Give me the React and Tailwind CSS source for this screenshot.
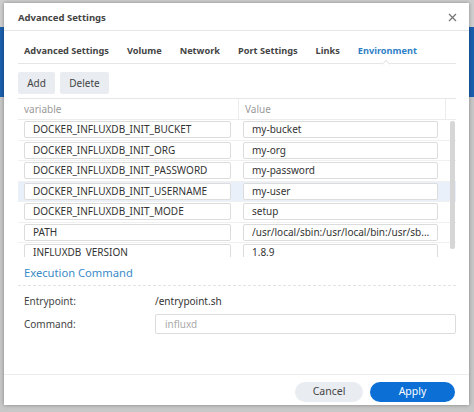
import React from "react";

const rows = [
  ["DOCKER_INFLUXDB_INIT_BUCKET", "my-bucket"],
  ["DOCKER_INFLUXDB_INIT_ORG", "my-org"],
  ["DOCKER_INFLUXDB_INIT_PASSWORD", "my-password"],
  ["DOCKER_INFLUXDB_INIT_USERNAME", "my-user"],
  ["DOCKER_INFLUXDB_INIT_MODE", "setup"],
  ["PATH", "/usr/local/sbin:/usr/local/bin:/usr/sb..."],
  ["INFLUXDB_VERSION", "1.8.9"],
];

const tabs = ["Advanced Settings", "Volume", "Network", "Port Settings", "Links", "Environment"];

export default function App() {
  return (
    <div
      className="relative w-[474px] h-[412px] overflow-hidden bg-[#c4c4c4] text-[#333]"
      style={{ fontFamily: '"Noto Sans", "DejaVu Sans", sans-serif' }}
    >
      <div className="flex flex-col h-full">
        <div className="h-[27px] bg-[#cfcfcf]" />
        <div className="h-[70px] bg-[#1b5fae]" />
        <div className="flex-1 bg-[#c8c8c8]" />
      </div>

      <div className="absolute left-[4px] top-[3px] w-[465px] h-[402px] bg-white shadow-[0_0_4px_rgba(0,0,0,0.35)] flex flex-col">
        {/* title bar */}
        <div className="h-[28px] shrink-0 flex items-center justify-between pt-[3px] pl-[14px] pr-[13px] border-b border-[#e6e6e6]">
          <span className="text-[9.5px] font-bold text-[#444] whitespace-nowrap">Advanced Settings</span>
          <svg width="9" height="9" viewBox="0 0 9 9" className="mr-[-1px] mt-[-1px]">
            <path d="M1 1 L8 8 M8 1 L1 8" stroke="#777" strokeWidth="1.3" />
          </svg>
        </div>

        <div className="flex-1 flex flex-col px-[14px] pr-[13px]">
          {/* tabs */}
          <div className="relative h-[33px] shrink-0 flex items-end pb-[8px] gap-[18px] pl-[6px] border-b border-[#e6e6e6]">
            {tabs.map((t) => (
              <span
                key={t}
                className={
                  "text-[9.2px] font-bold leading-none whitespace-nowrap " +
                  (t === "Environment" ? "text-[#2f7fc7]" : "text-[#444]")
                }
              >
                {t}
              </span>
            ))}
            <div className="absolute left-[365px] bottom-[-4px] w-[6px] h-[6px] bg-white border-l border-t border-[#e6e6e6] rotate-45" />
          </div>

          {/* buttons */}
          <div className="flex gap-[5px] mt-[8px] shrink-0">
            <div className="h-[22px] w-[37px] flex items-center justify-center bg-[#e9ecf1] rounded-[2px] text-[10px] text-[#444]">Add</div>
            <div className="h-[22px] w-[49px] flex items-center justify-center bg-[#e9ecf1] rounded-[2px] text-[10px] text-[#444]">Delete</div>
          </div>

          {/* table */}
          <div className="mt-[4px] h-[159px] shrink-0 border-t border-[#e6e6e6] overflow-hidden relative">
            <div className="flex h-[21px] border-b border-[#ececec] text-[10px] text-[#9a9a9a]">
              <div className="w-[220px] pl-[6px] flex items-center">variable</div>
              <div className="w-[207px] pl-[6px] flex items-center border-l border-[#ececec]">Value</div>
              <div className="flex-1 border-l border-[#ececec]" />
            </div>
            <div className="relative">
              {rows.map(([k, v], i) => (
                <div
                  key={k}
                  className={
                    "flex h-[20.5px] items-center border-b border-[#f0f0f0] " +
                    (i === 3 ? "bg-[#e9f0f9]" : "")
                  }
                >
                  <div className="w-[220px] pl-[6px] pr-[7px]">
                    <div className="h-[17px] bg-white border border-[#dcdcdc] rounded-[2px] pl-[8px] flex items-center text-[10px] text-[#333] whitespace-nowrap overflow-hidden">
                      {k}
                    </div>
                  </div>
                  <div className="w-[207px] pl-[5px] pr-[7px]">
                    <div className="h-[17px] bg-white border border-[#dcdcdc] rounded-[2px] pl-[8px] flex items-center text-[10px] text-[#333] whitespace-nowrap overflow-hidden">
                      {v}
                    </div>
                  </div>
                </div>
              ))}
              <div className="absolute right-[1px] top-[1px] w-[5px] h-[128px] bg-[#d6d6d6] rounded-[2px]" />
            </div>
          </div>

          {/* execution command */}
          <div className="mt-[5px] h-[24px] shrink-0 flex items-center pl-[6px] border-b border-dashed border-[#e3e3e3]">
            <span className="text-[11.2px] text-[#3a8bc8] whitespace-nowrap">Execution Command</span>
          </div>

          <div className="flex items-center h-[20px] mt-[5px] pl-[6px] text-[10px] text-[#444]">
            <span className="w-[131px]">Entrypoint:</span>
            <span className="text-[#333]">/entrypoint.sh</span>
          </div>
          <div className="flex items-center h-[20px] mt-[3px] pl-[6px] text-[10px] text-[#444]">
            <span className="w-[131px]">Command:</span>
            <div className="flex-1 h-[20px] border border-[#dcdcdc] rounded-[2px] pl-[9px] flex items-center text-[#aaa]">influxd</div>
          </div>
          <div className="flex-1" />
        </div>

        {/* footer */}
        <div className="h-[31px] shrink-0 border-t border-[#ececec] flex items-start justify-end gap-[7px] pt-[7px] pr-[14px]">
          <div className="h-[20px] w-[68px] rounded-full bg-[#e9ecf1] flex items-center justify-center text-[10.5px] text-[#444]">Cancel</div>
          <div className="h-[20px] w-[85px] rounded-full bg-[#0b6fd6] flex items-center justify-center text-[10.5px] text-white">Apply</div>
        </div>
      </div>
    </div>
  );
}
